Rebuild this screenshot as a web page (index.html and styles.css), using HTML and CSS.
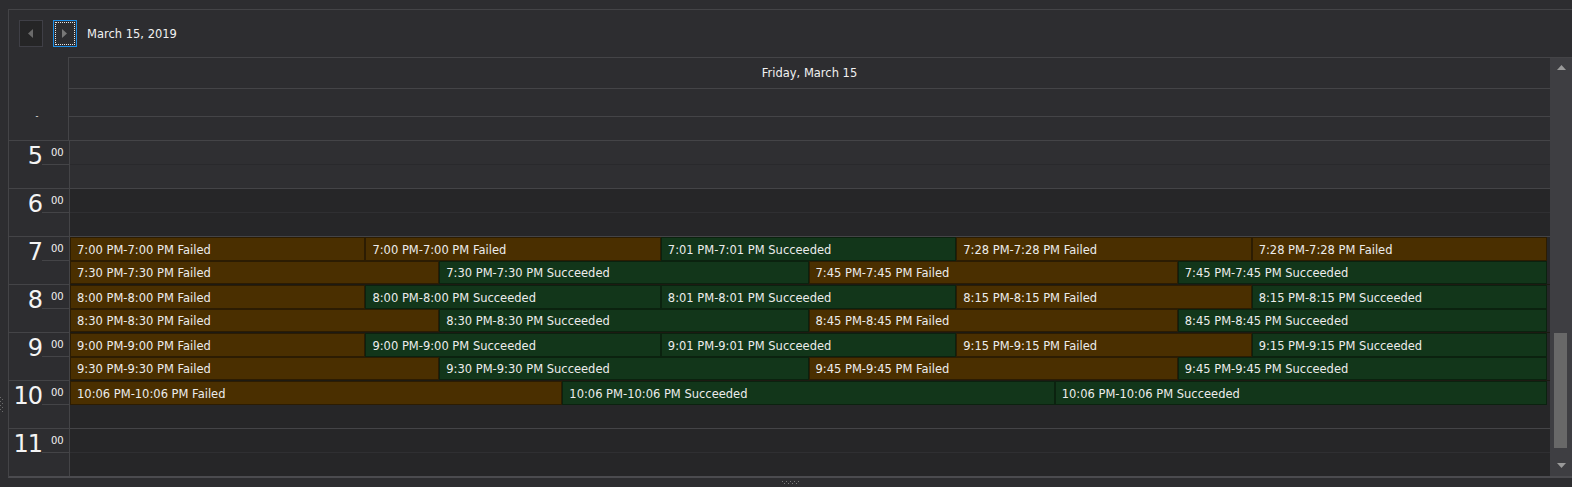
FILE: index.html
```html
<!DOCTYPE html>
<html lang="en">
<head>
<meta charset="UTF-8">
<meta name="viewport" content="width=device-width, initial-scale=1.0">
<title>Job History</title>
<link rel="stylesheet" href="styles.css">
</head>
<body>
<div class="grip-left">
    <svg width="4" height="16" viewBox="0 0 4 16"><g fill="#6b6b6b">
        <rect x="0" y="0" width="1" height="1"/><rect x="0" y="4" width="1" height="1"/><rect x="0" y="8" width="1" height="1"/><rect x="0" y="12" width="1" height="1"/>
        <rect x="2" y="2" width="1" height="1"/><rect x="2" y="6" width="1" height="1"/><rect x="2" y="10" width="1" height="1"/><rect x="2" y="14" width="1" height="1"/>
    </g></svg>
</div>

<div class="scheduler">
    <div class="toolbar">
        <button class="nav-btn" type="button">
            <svg width="6" height="9" viewBox="0 0 6 9"><polygon points="5,0 5,9 0,4.5" fill="#6a6a6a"/></svg>
        </button>
        <button class="nav-btn focused" type="button">
            <svg width="6" height="9" viewBox="0 0 6 9"><polygon points="0,0 0,9 5,4.5" fill="#787878"/></svg>
        </button>
        <span class="current-date">March 15, 2019</span>
    </div>

    <div class="view">
        <div class="grid">
            <div class="head">
                <div class="corner"><span class="dash">-</span></div>
                <div class="day-head">
                    <div class="day-title">Friday, March 15</div>
                    <div class="allday a1"></div>
                    <div class="allday a2"></div>
                </div>
            </div>

            <div class="hour work">
                <div class="time"><span class="h">5</span><span class="m">00</span></div>
                <div class="day"><div class="slot"></div><div class="slot half"></div></div>
            </div>

            <div class="hour">
                <div class="time"><span class="h">6</span><span class="m">00</span></div>
                <div class="day"><div class="slot"></div><div class="slot half"></div></div>
            </div>

            <div class="hour">
                <div class="time"><span class="h">7</span><span class="m">00</span></div>
                <div class="day">
                    <div class="ev-row">
                        <div class="ev failed">7:00 PM-7:00 PM Failed</div>
                        <div class="ev failed">7:00 PM-7:00 PM Failed</div>
                        <div class="ev ok">7:01 PM-7:01 PM Succeeded</div>
                        <div class="ev failed">7:28 PM-7:28 PM Failed</div>
                        <div class="ev failed">7:28 PM-7:28 PM Failed</div>
                    </div>
                    <div class="ev-row second">
                        <div class="ev failed">7:30 PM-7:30 PM Failed</div>
                        <div class="ev ok">7:30 PM-7:30 PM Succeeded</div>
                        <div class="ev failed">7:45 PM-7:45 PM Failed</div>
                        <div class="ev ok">7:45 PM-7:45 PM Succeeded</div>
                    </div>
                </div>
            </div>

            <div class="hour busy">
                <div class="time"><span class="h">8</span><span class="m">00</span></div>
                <div class="day">
                    <div class="ev-row">
                        <div class="ev failed">8:00 PM-8:00 PM Failed</div>
                        <div class="ev ok">8:00 PM-8:00 PM Succeeded</div>
                        <div class="ev ok">8:01 PM-8:01 PM Succeeded</div>
                        <div class="ev failed">8:15 PM-8:15 PM Failed</div>
                        <div class="ev ok">8:15 PM-8:15 PM Succeeded</div>
                    </div>
                    <div class="ev-row second">
                        <div class="ev failed">8:30 PM-8:30 PM Failed</div>
                        <div class="ev ok">8:30 PM-8:30 PM Succeeded</div>
                        <div class="ev failed">8:45 PM-8:45 PM Failed</div>
                        <div class="ev ok">8:45 PM-8:45 PM Succeeded</div>
                    </div>
                </div>
            </div>

            <div class="hour busy">
                <div class="time"><span class="h">9</span><span class="m">00</span></div>
                <div class="day">
                    <div class="ev-row">
                        <div class="ev failed">9:00 PM-9:00 PM Failed</div>
                        <div class="ev ok">9:00 PM-9:00 PM Succeeded</div>
                        <div class="ev ok">9:01 PM-9:01 PM Succeeded</div>
                        <div class="ev failed">9:15 PM-9:15 PM Failed</div>
                        <div class="ev ok">9:15 PM-9:15 PM Succeeded</div>
                    </div>
                    <div class="ev-row second">
                        <div class="ev failed">9:30 PM-9:30 PM Failed</div>
                        <div class="ev ok">9:30 PM-9:30 PM Succeeded</div>
                        <div class="ev failed">9:45 PM-9:45 PM Failed</div>
                        <div class="ev ok">9:45 PM-9:45 PM Succeeded</div>
                    </div>
                </div>
            </div>

            <div class="hour busy">
                <div class="time"><span class="h">10</span><span class="m">00</span></div>
                <div class="day">
                    <div class="ev-row">
                        <div class="ev failed">10:06 PM-10:06 PM Failed</div>
                        <div class="ev ok">10:06 PM-10:06 PM Succeeded</div>
                        <div class="ev ok">10:06 PM-10:06 PM Succeeded</div>
                    </div>
                    <div class="slot"></div>
                </div>
            </div>

            <div class="hour">
                <div class="time"><span class="h">11</span><span class="m">00</span></div>
                <div class="day"><div class="slot"></div><div class="slot half"></div></div>
            </div>
        </div>

        <div class="vscroll">
            <div class="sb-btn up">
                <svg width="9" height="5" viewBox="0 0 9 5"><polygon points="4.5,0 9,5 0,5" fill="#9a9a9a"/></svg>
            </div>
            <div class="sb-track"><div class="sb-thumb"></div></div>
            <div class="sb-btn down">
                <svg width="9" height="5" viewBox="0 0 9 5"><polygon points="0,0 9,0 4.5,5" fill="#9a9a9a"/></svg>
            </div>
        </div>
    </div>
</div>

<div class="grip-bottom">
    <svg width="17" height="3" viewBox="0 0 17 3"><g fill="#7a7a7a">
        <rect x="0" y="0" width="1" height="1"/><rect x="4" y="0" width="1" height="1"/><rect x="8" y="0" width="1" height="1"/><rect x="12" y="0" width="1" height="1"/><rect x="16" y="0" width="1" height="1"/>
        <rect x="2" y="2" width="1" height="1"/><rect x="6" y="2" width="1" height="1"/><rect x="10" y="2" width="1" height="1"/><rect x="14" y="2" width="1" height="1"/>
    </g></svg>
</div>
</body>
</html>
```

FILE: styles.css
```css
body, html {
    margin: 0;
    height: 487px;
    overflow: hidden;
}

body {
    position: relative;
    background-color: #2d2d30;
    color: #f1f1f1;
    font-family: "DejaVu Sans", Tahoma, sans-serif;
    font-size: 11.5px;
}

.scheduler {
    margin: 9px 0 0 8px;
    border-top: 1px solid #444447;
    border-left: 1px solid #444447;
    border-bottom: 2px solid #4b4b4f;
}

/* top bar with the date navigation */
.toolbar {
    height: 47px;
    box-sizing: border-box;
    padding: 10px 10px 0;
    display: flex;
    align-items: flex-start;
}

.nav-btn {
    width: 24px;
    height: 27px;
    margin: 0 10px 0 0;
    padding: 0;
    background-color: #252526;
    border: 1px solid #3f3f46;
    display: flex;
    align-items: center;
    justify-content: center;
    position: relative;
}

.nav-btn.focused {
    background-color: #2d2d30;
    border-color: #1e8fe8;
}

.nav-btn.focused::after {
    content: "";
    position: absolute;
    left: 1px;
    top: 1px;
    right: 1px;
    bottom: 1px;
    border: 1px dotted #e8e8e8;
}

.current-date {
    line-height: 27px;
    padding-top: 1px;
}

.view {
    display: flex;
}

.grid {
    flex: 1;
}

/* column header */
.head {
    display: flex;
}

.corner {
    width: 60px;
    border-right: 1px solid #444447;
    display: flex;
    align-items: flex-end;
    justify-content: center;
    padding-bottom: 19px;
    box-sizing: border-box;
}

.corner .dash {
    font-size: 8px;
    line-height: 8px;
    margin-right: 3px;
}

.day-head {
    flex: 1;
    border-top: 1px solid #444447;
}

.day-title {
    height: 31px;
    box-sizing: border-box;
    padding-top: 1px;
    line-height: 29px;
    text-align: center;
    border-bottom: 1px solid #444447;
}

.allday.a1 {
    height: 27px;
    border-bottom: 1px solid #444447;
}

.allday.a2 {
    height: 23px;
}

/* hour rows */
.hour {
    display: flex;
    height: 48px;
}

.time {
    width: 60px;
    flex: none;
    border-top: 1px solid #444447;
    border-right: 1px solid #444447;
    display: grid;
    grid-template-columns: 33px 27px;
    grid-template-rows: 24px 23px;
}

.time .h {
    grid-row: 1 / 3;
    text-align: right;
    font-size: 24px;
    line-height: 24px;
    padding-top: 3px;
    letter-spacing: -1px;
    color: #f4f4f4;
}

.time .m {
    font-size: 10px;
    line-height: 10px;
    padding: 7px 0 0 9px;
    border-bottom: 1px solid #444447;
    box-sizing: border-box;
}

.day {
    flex: 1;
    border-top: 1px solid #444447;
    background-color: #262628;
}

.hour.work .day {
    background-color: #2f2f32;
}

.slot {
    height: 23px;
}

.slot.half {
    border-top: 1px solid #2f2f32;
}

.hour.work .slot.half {
    border-top-color: #29292c;
}

.hour.busy .day {
    border-top-color: #1d1a12;
}

/* appointments */
.ev-row {
    display: flex;
    height: 24px;
    margin-right: 3px;
}

.ev-row.second {
    height: 23px;
}

.ev {
    flex: 1 1 0;
    min-width: 0;
    box-sizing: border-box;
    border: 1px solid;
    padding: 1px 0 0 6px;
    white-space: nowrap;
    overflow: hidden;
    display: flex;
    align-items: center;
    color: #ececec;
}

.ev.failed {
    background-color: #4a2f00;
    border-color: #2c1c02;
}

.ev.ok {
    background-color: #12361a;
    border-color: #0b220f;
}

/* vertical scroll bar */
.vscroll {
    width: 22px;
    flex: none;
    border-top: 1px solid #444447;
    background-color: #3e3e42;
    display: flex;
    flex-direction: column;
}

.sb-btn {
    height: 22px;
    display: flex;
    justify-content: center;
}

.sb-btn.up {
    align-items: flex-start;
    padding-top: 7px;
    box-sizing: border-box;
}

.sb-btn.down {
    align-items: center;
}

.sb-track {
    flex: 1;
}

.sb-thumb {
    width: 13px;
    height: 115px;
    margin: 253px 0 0 4px;
    background-color: #686868;
}

/* splitter grips */
.grip-left {
    position: absolute;
    left: 0;
    top: 397px;
    line-height: 0;
}

.grip-bottom {
    height: 9px;
    display: flex;
    justify-content: center;
    align-items: center;
    padding-left: 8px;
    line-height: 0;
}
```
